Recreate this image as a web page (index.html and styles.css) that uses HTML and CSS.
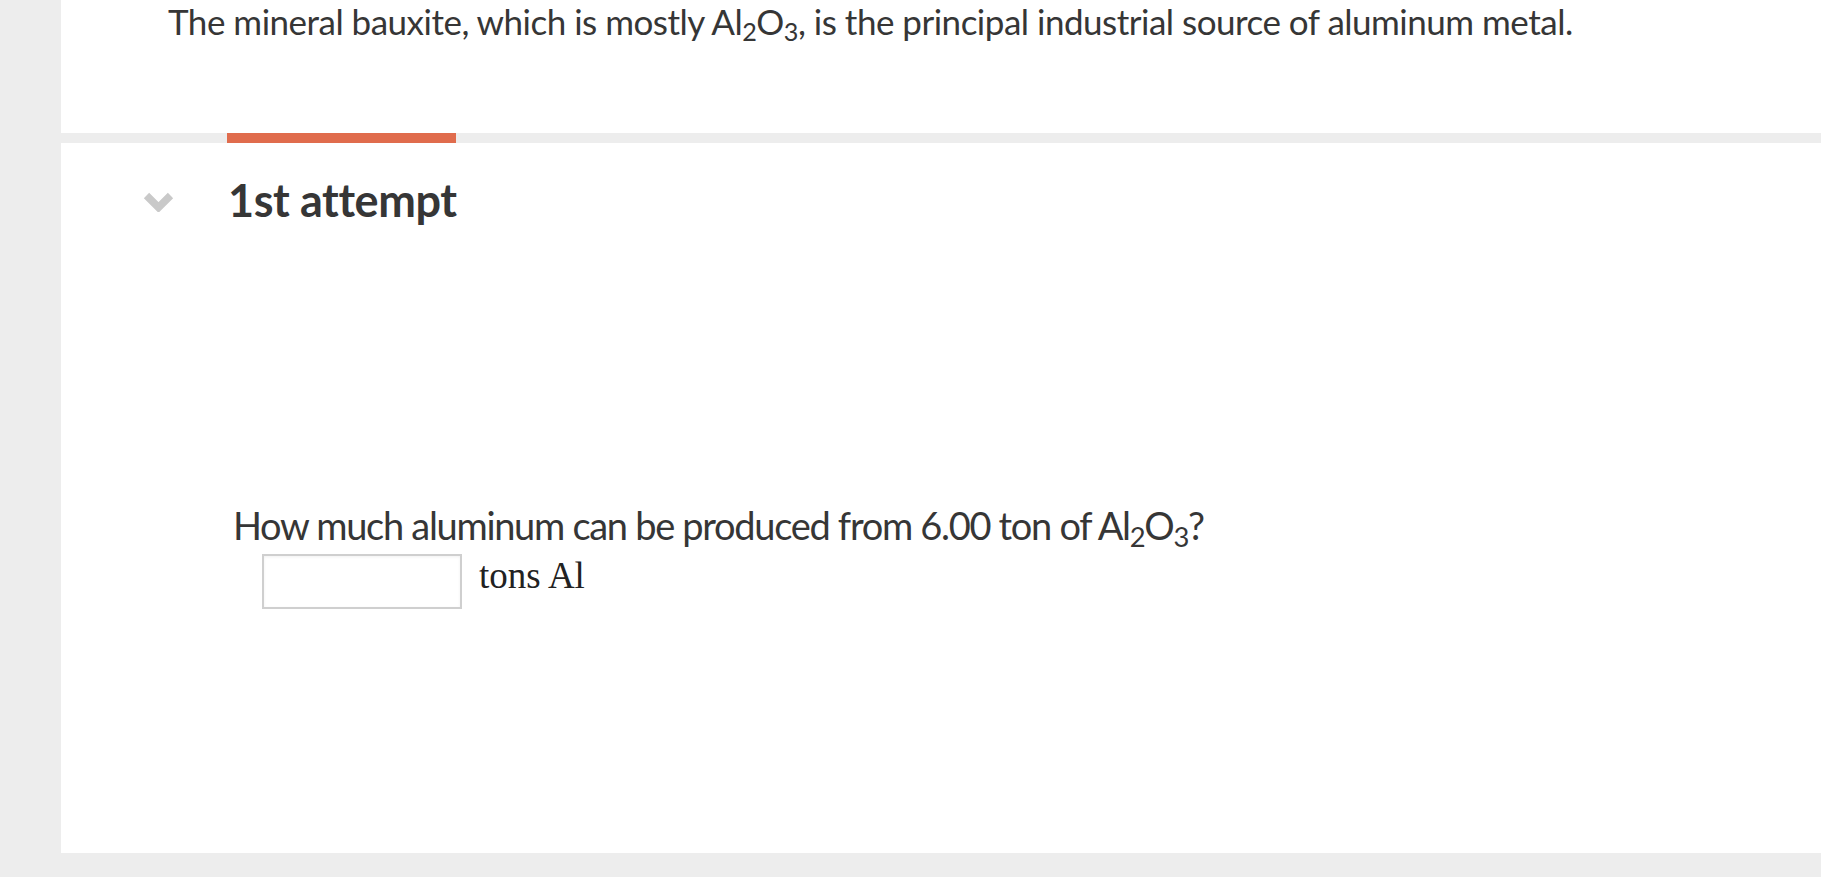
FILE: index.html
```html
<!DOCTYPE html>
<html>
<head>
<meta charset="utf-8">
<link rel="stylesheet" href="styles.css">
</head>
<body>
<div class="page">
  <section class="intro">
    <p class="intro-text">The mineral bauxite, which is mostly Al<sub>2</sub>O<sub>3</sub>, is the principal industrial source of aluminum metal.</p>
  </section>
  <div class="tabs">
    <div class="tab-active"></div>
  </div>
  <section class="attempt">
    <div class="attempt-head">
      <svg class="chevron" viewBox="0 0 31 20" width="31" height="20"><polyline points="3.5,3.5 15.5,15.5 27.5,3.5" fill="none" stroke="#c9c9c9" stroke-width="7.5"/></svg>
      <h2 class="attempt-title">1st attempt</h2>
    </div>
    <div class="question">
      <p class="question-text">How much aluminum can be produced from 6.00 ton of Al<sub>2</sub>O<sub>3</sub>?</p>
      <div class="answer-row">
        <input class="answer-input" type="text">
        <span class="unit">tons Al</span>
      </div>
    </div>
  </section>
</div>
</body>
</html>
```
FILE: styles.css
```css
html, body {
  margin: 0;
  padding: 0;
  background: #ededed;
  height: 100%;
  overflow: hidden;
}
.page {
  margin-left: 61px;
  display: flex;
  flex-direction: column;
}
.intro {
  background: #fff;
  height: 133px;
  padding-left: 107px;
  box-sizing: border-box;
}
.intro-text {
  margin: 0;
  font-family: Lato, "Liberation Sans", sans-serif;
  font-size: 35px;
  line-height: 42px;
  letter-spacing: -0.5px;
  color: #363636;
}
sub {
  font-size: 72%;
  line-height: 0;
  vertical-align: -0.25em;
}
.tabs {
  height: 10px;
  background: #ededed;
  display: flex;
}
.tab-active {
  margin-left: 166px;
  width: 229px;
  background: #e06c4d;
}
.attempt {
  background: #fff;
  height: 710px;
  box-sizing: border-box;
  padding-top: 30px;
}
.attempt-head {
  display: flex;
  align-items: center;
}
.chevron {
  margin-left: 82px;
  margin-right: 54px;
  margin-top: 4px;
}
.attempt-title {
  margin: 0;
  font-family: Lato, "Liberation Sans", sans-serif;
  font-weight: 700;
  font-size: 45px;
  line-height: 54px;
  letter-spacing: -0.4px;
  color: #363636;
}
.question {
  margin-top: 275px;
  padding-left: 172px;
}
.question-text {
  margin: 0;
  font-family: Lato, "Liberation Sans", sans-serif;
  font-size: 38px;
  line-height: 46px;
  letter-spacing: -1.3px;
  color: #363636;
}
.answer-row {
  display: flex;
  align-items: center;
  margin-top: 6px;
  padding-left: 29px;
}
.answer-input {
  width: 200px;
  height: 55px;
  box-sizing: border-box;
  border: 2px solid #cfcfcf;
  box-shadow: inset 0 1px 3px rgba(0,0,0,0.06);
  margin: 0;
  padding: 0;
  background: #fff;
}
.unit {
  margin-left: 17px;
  margin-top: -12px;
  font-family: "Liberation Serif", "Times New Roman", serif;
  font-size: 37px;
  color: #222;
}
```
